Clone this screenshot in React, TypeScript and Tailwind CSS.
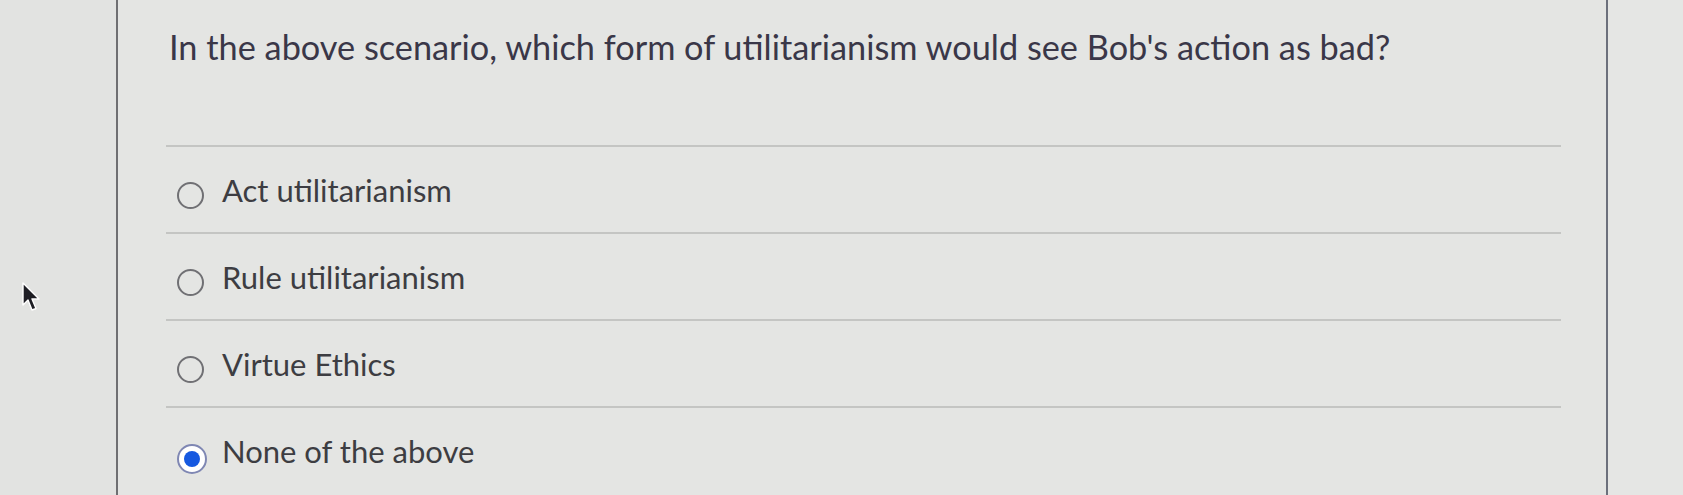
import React from "react";

const options = [
  { label: "Act utilitarianism", selected: false },
  { label: "Rule utilitarianism", selected: false },
  { label: "Virtue Ethics", selected: false },
  { label: "None of the above", selected: true },
];

function Radio({ selected }: { selected: boolean }) {
  if (selected) {
    return (
      <span className="mt-[11px] flex h-[30px] w-[30px] shrink-0 items-center justify-center rounded-full border-2 border-[#7f87b3] bg-white">
        <span className="h-[16px] w-[16px] rounded-full bg-[#1558e0]" />
      </span>
    );
  }
  return <span className="mt-[10px] h-[27px] w-[27px] shrink-0 rounded-full border-2 border-[#707074]" />;
}

export default function App() {
  return (
    <div
      className="relative flex h-[495px] w-[1683px] overflow-hidden bg-[#e3e4e2]"
      style={{ fontFamily: "Lato, 'Open Sans', sans-serif" }}
    >
      {/* left gutter */}
      <div className="w-[116px] shrink-0 bg-[#e2e3e1]" />
      {/* main panel */}
      <div className="w-[1492px] shrink-0 border-x-2 border-l-[#6f6f72] border-r-[#6c707c] bg-[#e4e5e3] pl-[48px] pr-[45px]">
        <h1 className="pl-[3px] pt-[26px] text-[34.3px] font-normal leading-[41px] text-[#3a3748]">
          In the above scenario, which form of utilitarianism would see Bob's action as bad?
        </h1>
        <div className="mt-[78px]">
          {options.map((o) => (
            <div key={o.label} className="flex items-start border-t-2 border-[#c4c5c3] pb-[23px] pl-[11px] pt-[25px]">
              <span className="flex w-[30px] shrink-0 justify-start">
                <Radio selected={o.selected} />
              </span>
              <span className="ml-[15px] text-[31px] leading-[37px] text-[#3d3d42]">{o.label}</span>
            </div>
          ))}
        </div>
      </div>
      {/* right gutter */}
      <div className="flex-1 bg-[#e5e6e4]" />
      {/* mouse cursor overlay */}
      <svg className="absolute left-[20px] top-[281px]" width="22" height="32" viewBox="0 0 22 32">
        <path d="M3 2 L3 24 L8 19 L12 29 L16 27.5 L12 18 L19 18 Z" fill="#1e1e24" stroke="#ffffff" strokeWidth="1.4" strokeLinejoin="round" />
      </svg>
    </div>
  );
}
